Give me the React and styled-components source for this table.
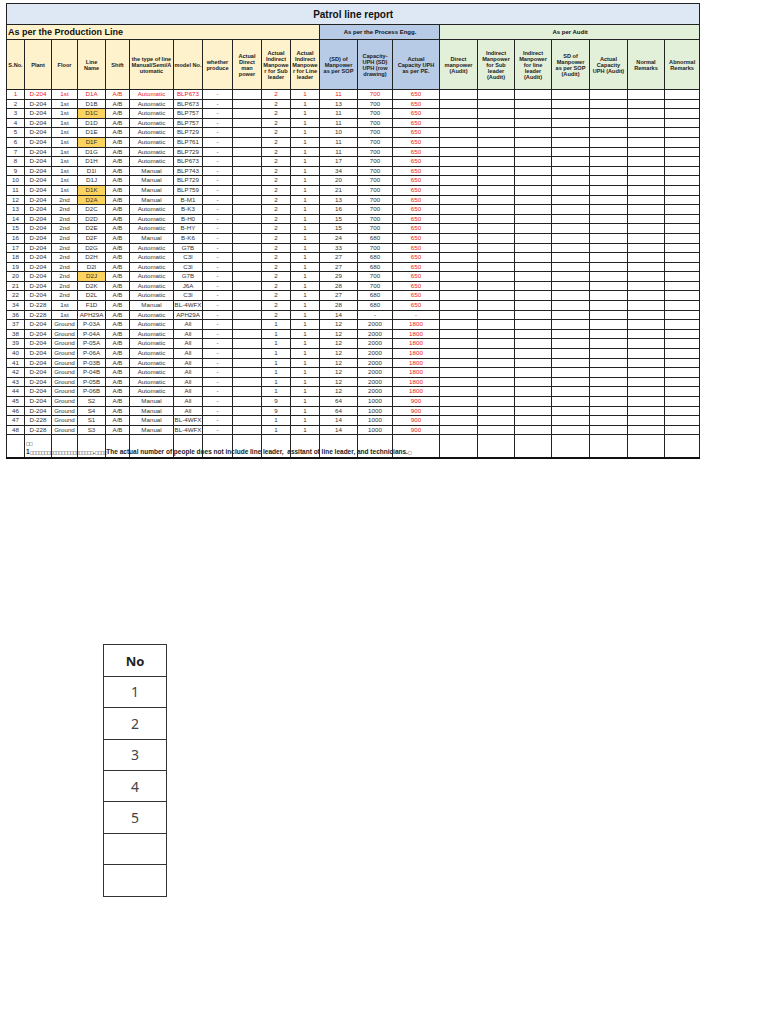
import React from 'react';
import styled, { createGlobalStyle } from 'styled-components';

const GlobalStyle = createGlobalStyle`
  html, body {
    margin: 0;
    background: #fff;
  }
  body {
    font-family: "Liberation Sans", Arial, sans-serif;
  }
`;

const Page = styled.div`
  width: 768px;
  min-height: 1024px;
  padding: 3px 0 0 6px;
  box-sizing: border-box;
`;

const Sheet = styled.table`
  border-collapse: collapse;
  table-layout: fixed;
  width: 693px;
  border: 1.5px solid #111;
  border-bottom: 2px solid #111;
`;

const Row = styled.tr`
  height: ${(p) => p.$h}px;
`;

const TitleCell = styled.td`
  background: #dde8f4;
  border: 1px solid #222;
  text-align: center;
  font-size: 10px;
  font-weight: 700;
  color: #111;
  padding: 0;
`;

const BandCell = styled.td`
  background: ${(p) => p.$bg};
  border: 1px solid #222;
  text-align: ${(p) => (p.$left ? 'left' : 'center')};
  font-size: ${(p) => (p.$big ? '9px' : '6px')};
  font-weight: 700;
  color: #111;
  padding: 0 0 0 1px;
  white-space: nowrap;
  overflow: hidden;
`;

const HeadCell = styled.th`
  background: ${(p) => p.$bg};
  border: 1px solid #222;
  font-size: 5.6px;
  line-height: 6px;
  font-weight: 700;
  color: #222;
  padding: 0;
  text-align: center;
  vertical-align: middle;
  white-space: nowrap;
  overflow: hidden;
`;

const Cell = styled.td`
  border: 1px solid #222;
  background: ${(p) => (p.$mark ? '#fcd35f' : '#fff')};
  color: ${(p) => (p.$red ? '#f01818' : '#333')};
  font-size: 6.2px;
  line-height: 8px;
  text-align: center;
  vertical-align: top;
  padding: 0;
  white-space: nowrap;
  overflow: hidden;
`;

const NoteCell = styled.td`
  border: 1px solid #222;
  padding: 0;
  vertical-align: top;
  white-space: nowrap;
  overflow: visible;
  position: relative;
`;

const NoteText = styled.div`
  padding: 4px 0 0 1px;
  font-size: 6.5px;
  line-height: 8px;
  font-weight: 700;
  color: #222;
`;

const Tofu = styled.span`
  font-family: "DejaVu Sans", sans-serif;
  font-size: 4px;
  font-weight: 400;
  letter-spacing: -0.9px;
`;

const NoTable = styled.table`
  margin: 185px 0 0 97px;
  border-collapse: collapse;
  width: 64px;
  font-family: "Noto Sans", "Open Sans", sans-serif;
`;

const NoCell = styled.td`
  border: 1.5px solid #333;
  height: 30.4px;
  padding: 0;
  text-align: center;
  font-size: ${(p) => (p.$head ? '13px' : '14px')};
  font-weight: ${(p) => (p.$head ? 700 : 400)};
  color: ${(p) => (p.$head ? '#222' : '#444')};
`;

const widths = [18, 27, 26, 28, 24, 44, 29, 30, 29, 29, 29, 38, 35, 47, 38, 37, 37, 38, 38, 37, 35];

const YELLOW = '#fef2cc';
const BLUE = '#b7cbe6';
const GREEN = '#e2efd9';

const headers = [
  'S.No.',
  'Plant',
  'Floor',
  'Line\nName',
  'Shift',
  'the type of line\nManual/Semi/A\nutomatic',
  'model No.',
  'whether\nproduce',
  'Actual\nDirect\nman\npower',
  'Actual\nIndirect\nManpowe\nr for Sub\nleader',
  'Actual\nIndirect\nManpowe\nr for Line\nleader',
  '(SD) of\nManpower\nas per SOP',
  'Capacity-\nUPH (SD)\nUPH  (row\ndrawing)',
  'Actual\nCapacity UPH\nas per PE.',
  'Direct\nmanpower\n(Audit)',
  'Indirect\nManpower\nfor Sub\nleader\n(Audit)',
  'Indirect\nManpower\nfor line\nleader\n(Audit)',
  'SD of\nManpower\nas per SOP\n(Audit)',
  'Actual\nCapacity\nUPH (Audit)',
  'Normal\nRemarks',
  'Abnormal\nRemarks',
];

// sno plant floor line type model direct-sub direct-line sd cap actual  (* = highlighted line)
const raw = `1 D-204 1st D1A Automatic BLP673 2 1 11 700 650
2 D-204 1st D1B Automatic BLP673 2 1 13 700 650
3 D-204 1st D1C* Automatic BLP757 2 1 11 700 650
4 D-204 1st D1D Automatic BLP757 2 1 11 700 650
5 D-204 1st D1E Automatic BLP729 2 1 10 700 650
6 D-204 1st D1F* Automatic BLP761 2 1 11 700 650
7 D-204 1st D1G Automatic BLP729 2 1 11 700 650
8 D-204 1st D1H Automatic BLP673 2 1 17 700 650
9 D-204 1st D1I Manual BLP743 2 1 34 700 650
10 D-204 1st D1J Manual BLP729 2 1 20 700 650
11 D-204 1st D1K* Manual BLP759 2 1 21 700 650
12 D-204 2nd D2A* Manual B-M1 2 1 13 700 650
13 D-204 2nd D2C Automatic B-K3 2 1 16 700 650
14 D-204 2nd D2D Automatic B-H0 2 1 15 700 650
15 D-204 2nd D2E Automatic B-HY 2 1 15 700 650
16 D-204 2nd D2F Manual B-K6 2 1 24 680 650
17 D-204 2nd D2G Automatic G7B 2 1 33 700 650
18 D-204 2nd D2H Automatic C3I 2 1 27 680 650
19 D-204 2nd D2I Automatic C3I 2 1 27 680 650
20 D-204 2nd D2J* Automatic G7B 2 1 29 700 650
21 D-204 2nd D2K Automatic J6A 2 1 28 700 650
22 D-204 2nd D2L Automatic C3I 2 1 27 680 650
34 D-228 1st F1D Manual BL-4WFX 2 1 28 680 650
36 D-228 1st APH29A Automatic APH29A 2 1 14 - -
37 D-204 Ground P-03A Automatic All 1 1 12 2000 1800
38 D-204 Ground P-04A Automatic All 1 1 12 2000 1800
39 D-204 Ground P-05A Automatic All 1 1 12 2000 1800
40 D-204 Ground P-06A Automatic All 1 1 12 2000 1800
41 D-204 Ground P-03B Automatic All 1 1 12 2000 1800
42 D-204 Ground P-04B Automatic All 1 1 12 2000 1800
43 D-204 Ground P-05B Automatic All 1 1 12 2000 1800
44 D-204 Ground P-06B Automatic All 1 1 12 2000 1800
45 D-204 Ground S2 Manual All 9 1 64 1000 900
46 D-204 Ground S4 Manual All 9 1 64 1000 900
47 D-228 Ground S1 Manual BL-4WFX 1 1 14 1000 900
48 D-228 Ground S3 Manual BL-4WFX 1 1 14 1000 900`;

const rows = raw.split('\n').map((line) => {
  const [sno, plant, floor, lineName, type, model, sub, lead, sd, cap, actual] = line.split(' ');
  return {
    sno,
    plant,
    floor,
    line: lineName.replace('*', ''),
    mark: lineName.endsWith('*'),
    type,
    model,
    sub,
    lead,
    sd,
    cap,
    actual,
  };
});

const Lines = ({ text }) =>
  text.split('\n').map((t, i) => (
    <React.Fragment key={i}>
      {i > 0 && <br />}
      {t}
    </React.Fragment>
  ));

const DataRow = ({ r }) => {
  const red = r.sno === '1';
  return (
    <Row $h={9.6}>
      <Cell $red={red}>{r.sno}</Cell>
      <Cell $red={red}>{r.plant}</Cell>
      <Cell $red={red}>{r.floor}</Cell>
      <Cell $red={red} $mark={r.mark}>{r.line}</Cell>
      <Cell $red={red}>A/B</Cell>
      <Cell $red={red}>{r.type}</Cell>
      <Cell $red={red}>{r.model}</Cell>
      <Cell $red={red}>-</Cell>
      <Cell />
      <Cell $red={red}>{r.sub}</Cell>
      <Cell $red={red}>{r.lead}</Cell>
      <Cell $red={red}>{r.sd}</Cell>
      <Cell $red={red}>{r.cap}</Cell>
      <Cell $red>{r.actual}</Cell>
      {Array.from({ length: 7 }).map((_, i) => (
        <Cell key={i} />
      ))}
    </Row>
  );
};

const headBg = (i) => (i < 11 ? YELLOW : i < 14 ? BLUE : GREEN);

const App = () => (
  <Page>
    <GlobalStyle />
    <Sheet>
      <colgroup>
        {widths.map((w, i) => (
          <col key={i} style={{ width: w }} />
        ))}
      </colgroup>
      <tbody>
        <Row $h={21}>
          <TitleCell colSpan={21}>Patrol line report</TitleCell>
        </Row>
        <Row $h={15}>
          <BandCell colSpan={11} $bg={YELLOW} $left $big>
            As per the Production Line
          </BandCell>
          <BandCell colSpan={3} $bg={BLUE}>
            As per the Process Engg.
          </BandCell>
          <BandCell colSpan={7} $bg={GREEN}>
            As per Audit
          </BandCell>
        </Row>
        <Row $h={50}>
          {headers.map((h, i) => (
            <HeadCell key={i} $bg={headBg(i)}>
              <Lines text={h} />
            </HeadCell>
          ))}
        </Row>
        {rows.map((r) => (
          <DataRow key={r.sno} r={r} />
        ))}
        <Row $h={23}>
          <NoteCell />
          <NoteCell>
            <NoteText>
              <Tofu>□□</Tofu>
              <br />
              1<Tofu>□□□□□□□□□□□□□□□□□□□□□□</Tofu>.<Tofu>□□□□</Tofu>The actual number of people does not
              include line leader,&nbsp; assitant of line leader, and technicians.<Tofu>□</Tofu>
            </NoteText>
          </NoteCell>
          {Array.from({ length: 19 }).map((_, i) => (
            <NoteCell key={i} />
          ))}
        </Row>
      </tbody>
    </Sheet>
    <NoTable>
      <tbody>
        <tr>
          <NoCell $head>No</NoCell>
        </tr>
        {['1', '2', '3', '4', '5', '', ''].map((n, i) => (
          <tr key={i}>
            <NoCell>{n}</NoCell>
          </tr>
        ))}
      </tbody>
    </NoTable>
  </Page>
);

export default App;
